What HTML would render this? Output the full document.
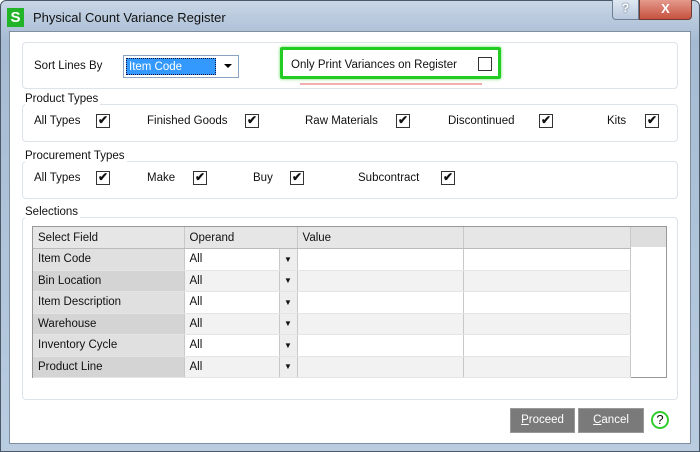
<!DOCTYPE html><html><head><style>
*{margin:0;padding:0;box-sizing:border-box}
body{width:700px;height:452px;overflow:hidden;font-family:"Liberation Sans",Arial,sans-serif;font-size:11.5px;color:#111;background:#fff;position:relative}
.a{position:absolute}
.frame{left:0;top:0;width:700px;height:452px;background:linear-gradient(#c9d6e6,#a6bbd3 40px,#b9cce0);border:1px solid #4a5868;border-radius:6px 6px 0 0}
.client{left:9px;top:31px;width:682px;height:413px;background:#fff;border:1px solid #7f8fa0}
.gb{border:1px solid #dde3ea;border-radius:4px}
.lbl{font-size:11.5px;line-height:14px;white-space:nowrap}
.cb{width:14px;height:14px;border:1px solid #333;background:#fff;font-size:12px;line-height:11px;text-align:center;font-weight:bold}
.grid td{border-right:1px solid #c8c8c8;border-bottom:1px solid #e4e4e4;height:21.5px;padding:0 5px;font-size:11.5px}
.grid{border-collapse:collapse;table-layout:fixed}
</style></head><body>
<div class="a frame"></div>
<div class="a" style="left:7px;top:8px;width:17px;height:19px;background:#22b428;color:#fff;font-weight:bold;font-size:15px;text-align:center;line-height:19px">S</div>
<div class="a lbl" style="left:33px;top:11px;font-size:13px">Physical Count Variance Register</div>
<div class="a" style="left:612px;top:0;width:27px;height:20px;border:1px solid #6d7f95;border-top:none;border-radius:0 0 0 4px;background:linear-gradient(#dfe8f2,#b9c9dc);text-align:center;color:#fff;font-weight:bold;line-height:18px;text-shadow:0 0 2px #456">?</div>
<div class="a" style="left:639px;top:0;width:53px;height:20px;border:1px solid #6d3a33;border-top:none;border-radius:0 0 4px 0;background:linear-gradient(#e49a8c,#c7513f);text-align:center;color:#fff;font-weight:bold;line-height:18px;font-size:13px">X</div>
<div class="a client"></div>

<div class="a gb" style="left:22px;top:42px;width:656px;height:47px"></div>
<div class="a lbl" style="left:34px;top:59px">Sort Lines By</div>
<div class="a" style="left:123px;top:55px;width:116px;height:23px;border:1px solid #8aa3c3;background:#fff"></div>
<div class="a lbl" style="left:126px;top:58px;width:90px;height:17px;background:#3399ff;color:#fff;padding:1px 2px;border:1px dotted #114">Item Code</div>
<div class="a" style="left:224px;top:64px;border-left:4px solid transparent;border-right:4px solid transparent;border-top:4px solid #000"></div>
<div class="a" style="left:280px;top:47px;width:221px;height:32px;border:3px solid #22cc22;border-radius:2px;box-shadow:0 0 3px #6d6"></div>
<div class="a lbl" style="left:291px;top:58px">Only Print Variances on Register</div>
<div class="a cb" style="left:478px;top:57px"></div>
<div class="a" style="left:300px;top:83px;width:182px;height:2px;background:#f0b0b0"></div>

<div class="a gb" style="left:22px;top:104px;width:656px;height:38px"></div>
<div class="a lbl" style="left:25px;top:92px;background:#fff;padding-right:2px">Product Types</div>
<div class="a lbl" style="left:34px;top:114px">All Types</div><div class="a cb" style="left:96px;top:114px">✔</div>
<div class="a lbl" style="left:147px;top:114px">Finished Goods</div><div class="a cb" style="left:245px;top:114px">✔</div>
<div class="a lbl" style="left:305px;top:114px">Raw Materials</div><div class="a cb" style="left:396px;top:114px">✔</div>
<div class="a lbl" style="left:448px;top:114px">Discontinued</div><div class="a cb" style="left:539px;top:114px">✔</div>
<div class="a lbl" style="left:607px;top:114px">Kits</div><div class="a cb" style="left:645px;top:114px">✔</div>

<div class="a gb" style="left:22px;top:161px;width:656px;height:38px"></div>
<div class="a lbl" style="left:25px;top:149px;background:#fff;padding-right:2px">Procurement Types</div>
<div class="a lbl" style="left:34px;top:171px">All Types</div><div class="a cb" style="left:96px;top:171px">✔</div>
<div class="a lbl" style="left:147px;top:171px">Make</div><div class="a cb" style="left:193px;top:171px">✔</div>
<div class="a lbl" style="left:253px;top:171px">Buy</div><div class="a cb" style="left:290px;top:171px">✔</div>
<div class="a lbl" style="left:358px;top:171px">Subcontract</div><div class="a cb" style="left:441px;top:171px">✔</div>

<div class="a gb" style="left:22px;top:217px;width:656px;height:183px"></div>
<div class="a lbl" style="left:25px;top:205px;background:#fff;padding-right:2px">Selections</div>
<div class="a" style="left:32px;top:226px;width:635px;height:152px;border:1px solid #999;background:#fff"></div>
<div class="a" style="left:629px;top:227px;width:37px;height:20px;background:#ddd"></div>
<table class="a grid" style="left:33px;top:227px;width:597px">
<colgroup><col style="width:151px"><col style="width:95px"><col style="width:18px"><col style="width:166px"><col style="width:167px"></colgroup>
<tr style="background:#e6e6e6"><td style="border-bottom:1px solid #bbb">Select Field</td><td colspan="2" style="border-bottom:1px solid #bbb">Operand</td><td style="border-bottom:1px solid #bbb">Value</td><td style="border-bottom:1px solid #bbb"></td></tr>
<tr><td style="background:#e0e0e0">Item Code</td><td>All</td><td style="background:#eee;text-align:center;font-size:8px;padding:0">▼</td><td></td><td></td></tr>
<tr style="background:#f2f2f2"><td style="background:#d4d4d4">Bin Location</td><td>All</td><td style="background:#eee;text-align:center;font-size:8px;padding:0">▼</td><td></td><td></td></tr>
<tr><td style="background:#e0e0e0">Item Description</td><td>All</td><td style="background:#eee;text-align:center;font-size:8px;padding:0">▼</td><td></td><td></td></tr>
<tr style="background:#f2f2f2"><td style="background:#d4d4d4">Warehouse</td><td>All</td><td style="background:#eee;text-align:center;font-size:8px;padding:0">▼</td><td></td><td></td></tr>
<tr><td style="background:#e0e0e0">Inventory Cycle</td><td>All</td><td style="background:#eee;text-align:center;font-size:8px;padding:0">▼</td><td></td><td></td></tr>
<tr style="background:#f2f2f2"><td style="background:#d4d4d4">Product Line</td><td>All</td><td style="background:#eee;text-align:center;font-size:8px;padding:0">▼</td><td></td><td></td></tr>
</table>

<div class="a" style="left:510px;top:408px;width:65px;height:25px;background:#7a7a7a;border:1px solid #999;color:#fff;text-align:center;line-height:23px"><u>P</u>roceed</div>
<div class="a" style="left:578px;top:408px;width:66px;height:25px;background:#7a7a7a;border:1px solid #999;color:#fff;text-align:center;line-height:23px"><u>C</u>ancel</div>
<div class="a" style="left:651px;top:411px;width:18px;height:18px;border:2px solid #3c3;border-radius:50%;text-align:center;line-height:14px;font-size:13px">?</div>
</body></html>
